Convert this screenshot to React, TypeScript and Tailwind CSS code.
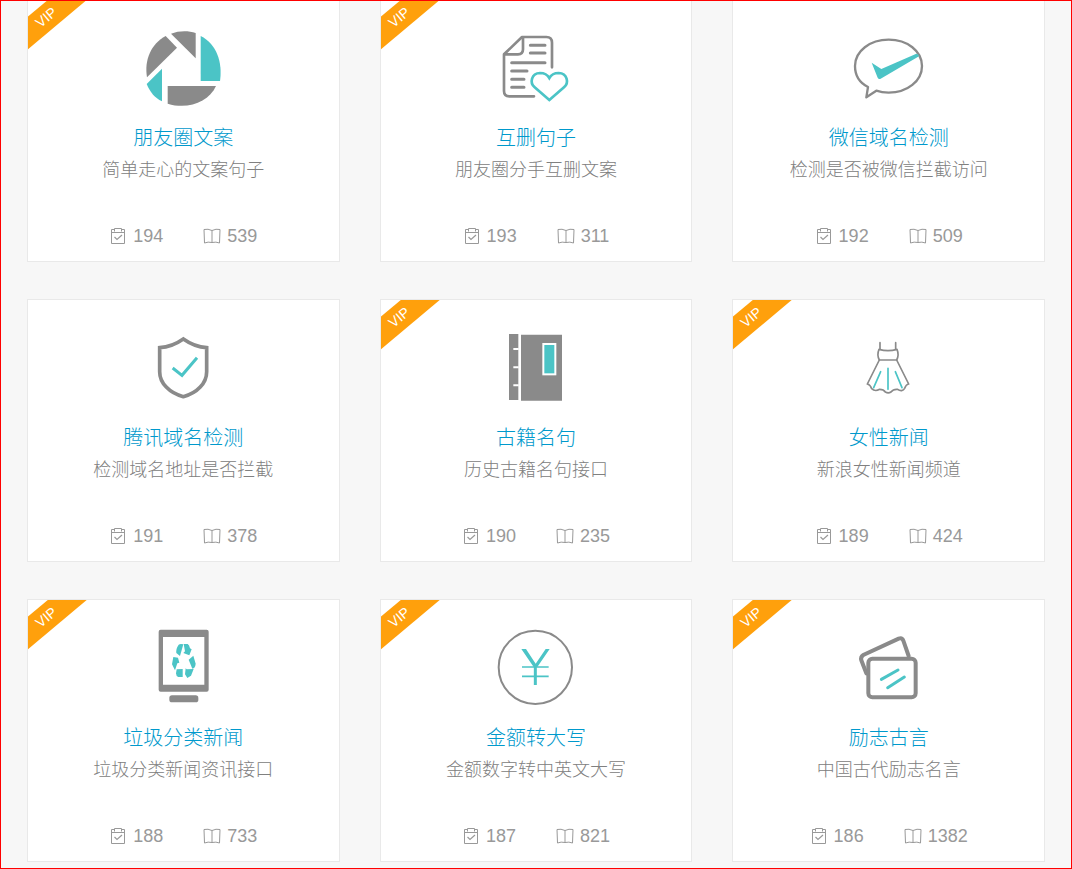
import type { ReactNode } from 'react';

const GRAY = '#8a8a8a';
const TEAL = '#4bc4c6';

type Api = {
  title: string;
  desc: string;
  docs: number;
  views: number;
  vip: boolean;
  icon: ReactNode;
};

function ApertureIcon() {
  return (
    <svg viewBox="25 24 240 240" className="size-20" aria-hidden="true">
      <g fill={GRAY}>
        <path d="M37 172C28 118 50 72 93 48L127 83Z" />
        <path d="M109 41C132 32 160 31 183 39V115Z" />
        <path d="M99 198H244C222 246 160 270 99 251Z" />
      </g>
      <g fill={TEAL}>
        <path d="M198 48C246 72 264 126 256 183H198Z" />
        <path d="M36 192L82 146V244C60 234 46 216 36 192Z" />
      </g>
    </svg>
  );
}

function LetterIcon() {
  return (
    <svg viewBox="19 24 240 240" className="size-20" fill="none" strokeWidth="8" aria-hidden="true">
      <g stroke={GRAY} strokeLinecap="round">
        <path d="M187 142V68Q187 51 170 51H97L43 103V213Q43 229 59 229H133" strokeLinejoin="round" />
        <path d="M100 53V88Q100 103 85 103H45" />
        <path d="M122 76H166M122 99H166M66 128H166M66 153H112M66 178H103M66 202H103" strokeWidth="9" />
      </g>
      <path
        d="M179 240L135 202C119 188 125 160 151 159C165 159 174 165 179 174C184 165 193 159 207 159C233 160 239 188 223 202Z"
        stroke={TEAL}
      />
    </svg>
  );
}

function BubbleIcon() {
  return (
    <svg viewBox="27 24 240 240" className="size-20" aria-hidden="true">
      <path
        d="M84 201C58 188 45 164 45 138C45 93 90 59 146 59C202 59 246 93 246 138C246 183 202 218 146 218C133 218 120 216 109 212L79 232Z"
        fill="none"
        stroke={GRAY}
        strokeWidth="7"
        strokeLinejoin="round"
      />
      <path d="M95 128L124 147L229 101Q236 101 237 109L122 176Q116 179 113 173Z" fill={TEAL} />
    </svg>
  );
}

function ShieldIcon() {
  return (
    <svg viewBox="25 24 240 240" className="size-20" fill="none" aria-hidden="true">
      <path
        d="M146 57Q112 81 75 83V155C75 189 104 219 146 230C188 219 216 189 216 155V83Q180 81 146 57Z"
        stroke={GRAY}
        strokeWidth="11"
      />
      <path d="M114 144L142 166L187 113" stroke={TEAL} strokeWidth="9" />
    </svg>
  );
}

function NotebookIcon() {
  return (
    <svg viewBox="18 24 240 240" className="size-20" aria-hidden="true">
      <path d="M57 42H85V240H57ZM93 44H216V242H93Z" fill={GRAY} />
      <path d="M70 87H86M70 142H86M70 196H86" stroke="#fff" strokeWidth="6" />
      <rect x="160" y="72" width="36" height="91" fill={TEAL} stroke="#fff" strokeWidth="6" />
    </svg>
  );
}

function DressIcon() {
  return (
    <svg viewBox="27 24 240 240" className="size-20" fill="none" strokeLinecap="round" aria-hidden="true">
      <g stroke={GRAY} strokeWidth="5" strokeLinejoin="round">
        <path d="M120 68V88M167 68V88" />
        <path d="M117 88Q144 96 171 88Q178 105 170 120H118Q110 105 117 88Z" />
        <path d="M118 120L82 192Q91 194 95 206Q105 216 119 208Q131 208 136 216Q145 221 153 216Q160 207 172 208Q187 217 194 205Q198 193 206 192L170 120" />
      </g>
      <path d="M122 155L101 203M144 145V208M166 155L186 203" stroke={TEAL} strokeWidth="5" />
    </svg>
  );
}

function RecycleIcon() {
  return (
    <svg viewBox="25 24 240 240" className="size-20" aria-hidden="true">
      <path
        d="M78 29H216Q222 29 222 35V209Q222 215 216 215H78Q72 215 72 209V35Q72 29 78 29ZM85 51V194H209V51Z"
        fill={GRAY}
        fillRule="evenodd"
      />
      <rect x="104" y="226" width="87" height="21" rx="8" fill={GRAY} />
      <g fill={TEAL}>
        <path d="M132 74Q136 71 146 73L136 108L125 99Q123 87 132 74Z" />
        <path d="M147 72H159Q164 74 166 85L171 88L164 106L146 99L151 94Z" />
        <path d="M116 111L130 113L134 128L128 130L121 151L112 133Z" />
        <path d="M162 119L176 107L183 131Q182 144 173 146Z" />
        <path d="M126 148L144 147V171H131Q124 169 124 160Z" />
        <path d="M153 145L156 148L177 147L169 167L158 174L151 163Z" />
      </g>
    </svg>
  );
}

function YuanIcon() {
  return (
    <svg viewBox="18 24 240 240" className="size-20" fill="none" aria-hidden="true">
      <circle cx="136" cy="142" r="110" stroke={GRAY} strokeWidth="6" />
      <path d="M136 134V195" stroke={TEAL} strokeWidth="9" />
      <path d="M96 141H176M96 169H176" stroke={TEAL} strokeWidth="5" />
      <path d="M94 87H108L137 131L167 87H179L142 141H131Z" fill={TEAL} />
    </svg>
  );
}

function CardsIcon() {
  return (
    <svg viewBox="27 24 240 240" className="size-20" fill="none" strokeLinecap="round" aria-hidden="true">
      <g stroke={GRAY} strokeWidth="12">
        <path d="M79 160L64 121Q61 111 70 105L176 56Q186 52 190 62L206 108" />
        <rect x="85" y="116" width="142" height="116" rx="12" />
      </g>
      <path d="M124 178L174 150M143 203L193 171" stroke={TEAL} strokeWidth="9" />
    </svg>
  );
}

function ClipboardIcon() {
  return (
    <svg viewBox="0 0 18 18" className="size-[18px]" fill="none" stroke="currentColor" aria-hidden="true">
      <path d="M5.5 2.5H2.5V16.5H15.5V2.5H12.5M2.5 5.5H15.5M5.5 4.5V1.5H12.5V4.5" />
      <path d="M5.5 10L8 12.5L13 8" strokeWidth="1.2" />
    </svg>
  );
}

function BookIcon() {
  return (
    <svg viewBox="0 0 18 18" className="size-[18px]" fill="none" stroke="currentColor" aria-hidden="true">
      <path d="M9 3.5Q5 1.5 1 2.5L1.5 16Q5 14.5 9 15.5Q13 14.5 16.5 16L17 2.5Q13 1.5 9 3.5ZM9 3.5V15.5" />
    </svg>
  );
}

const apis: Api[] = [
  { title: '朋友圈文案', desc: '简单走心的文案句子', docs: 194, views: 539, vip: true, icon: <ApertureIcon /> },
  { title: '互删句子', desc: '朋友圈分手互删文案', docs: 193, views: 311, vip: true, icon: <LetterIcon /> },
  { title: '微信域名检测', desc: '检测是否被微信拦截访问', docs: 192, views: 509, vip: false, icon: <BubbleIcon /> },
  { title: '腾讯域名检测', desc: '检测域名地址是否拦截', docs: 191, views: 378, vip: false, icon: <ShieldIcon /> },
  { title: '古籍名句', desc: '历史古籍名句接口', docs: 190, views: 235, vip: true, icon: <NotebookIcon /> },
  { title: '女性新闻', desc: '新浪女性新闻频道', docs: 189, views: 424, vip: true, icon: <DressIcon /> },
  { title: '垃圾分类新闻', desc: '垃圾分类新闻资讯接口', docs: 188, views: 733, vip: true, icon: <RecycleIcon /> },
  { title: '金额转大写', desc: '金额数字转中英文大写', docs: 187, views: 821, vip: true, icon: <YuanIcon /> },
  { title: '励志古言', desc: '中国古代励志名言', docs: 186, views: 1382, vip: true, icon: <CardsIcon /> },
];

function ApiCard({ api }: { api: Api }) {
  return (
    <article className="relative flex flex-col items-center overflow-hidden border border-[#e9e9e9] bg-white pt-7 pb-[13px]">
      {api.vip && (
        <span className="absolute top-[7px] left-[-44px] h-[25px] w-[120px] -rotate-40 bg-[#ffa00c] pl-1.5 text-center text-sm leading-6 text-white">
          VIP
        </span>
      )}
      {api.icon}
      <h2 className="mt-4 text-xl leading-7 font-light text-[#0099cc]">
        <a href="#">{api.title}</a>
      </h2>
      <p className="mt-1.5 text-lg leading-6 font-light text-[#808080]">{api.desc}</p>
      <div className="mt-[42px] flex gap-10 text-lg leading-6 text-[#999]">
        <span className="flex items-center gap-1.5">
          <ClipboardIcon />
          {api.docs}
        </span>
        <span className="flex items-center gap-1.5">
          <BookIcon />
          {api.views}
        </span>
      </div>
    </article>
  );
}

export default function App() {
  return (
    <main className="overflow-hidden border border-[#ff0000] bg-[#f7f7f7] px-[26px] pb-1.5 font-['Liberation_Sans','Noto_Sans_CJK_SC',sans-serif]">
      <div className="-mt-0.5 grid grid-cols-3 gap-x-10 gap-y-[37px]">
        {apis.map((api) => (
          <ApiCard key={api.title} api={api} />
        ))}
      </div>
    </main>
  );
}
